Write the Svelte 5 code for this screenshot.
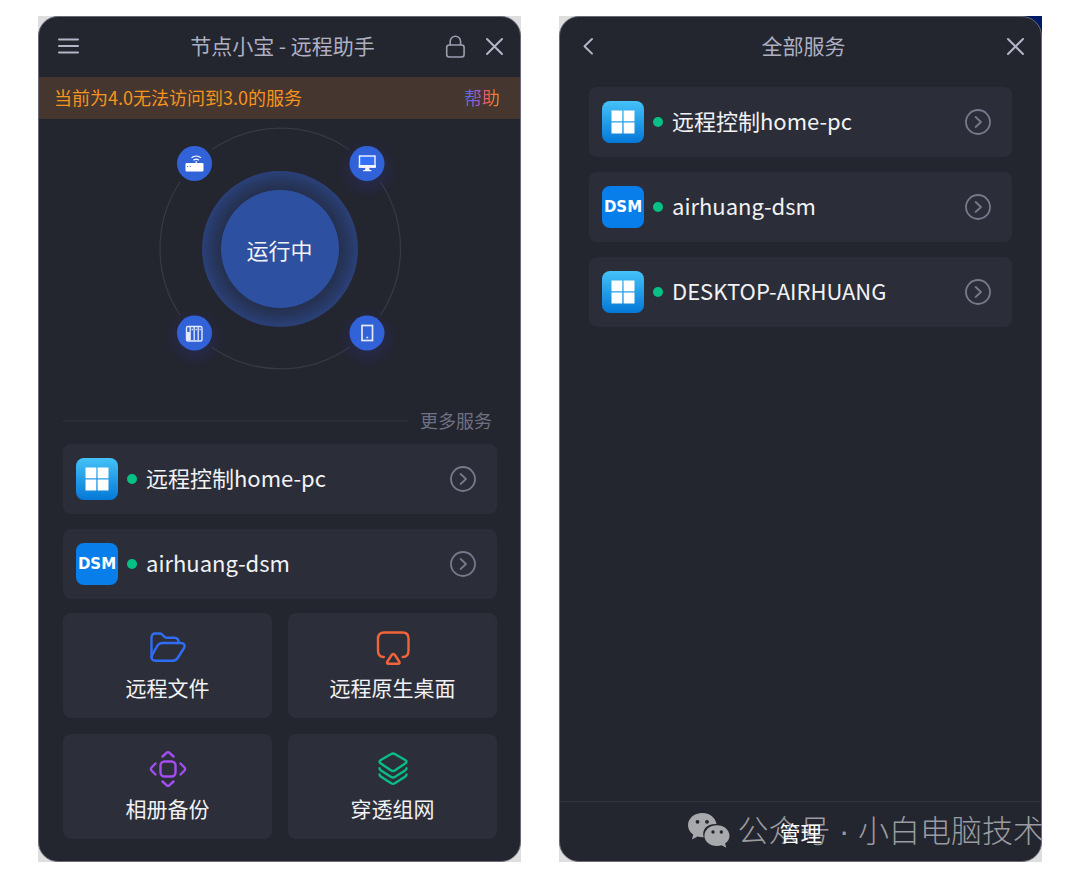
<script>
    const services = [
        { id: 1, name: '远程控制home-pc', type: 'windows' },
        { id: 2, name: 'airhuang-dsm', type: 'dsm' },
        { id: 3, name: 'DESKTOP-AIRHUANG', type: 'windows' }
    ];

    const tools = [
        { id: 'file', name: '远程文件', color: '#2f6df6' },
        { id: 'desktop', name: '远程原生桌面', color: '#f2643a' },
        { id: 'album', name: '相册备份', color: '#a44df0' },
        { id: 'network', name: '穿透组网', color: '#08bd86' }
    ];
</script>

{#snippet closeIcon()}
    <svg class="icon" viewBox="0 0 28 28"><path d="M7 6l15 15M22 6l-15 15" /></svg>
{/snippet}

{#snippet serviceCard(service)}
    <button class="service">
        {#if service.type === 'windows'}
            <span class="logo windows">
                <svg width="24" height="24" viewBox="0 0 24 24" fill="#fff">
                    <path d="M0.5 0.5h10.8v10.8h-10.8zM12.6 0.5h10.9v10.8h-10.9zM0.5 12.6h10.8v10.9h-10.8zM12.6 12.6h10.9v10.9h-10.9z" />
                </svg>
            </span>
        {:else}
            <span class="logo dsm">DSM</span>
        {/if}
        <span class="dot"></span>
        <span class="name">{service.name}</span>
        <svg class="go" viewBox="0 0 26 26">
            <circle cx="13" cy="13" r="12" />
            <path d="M10.6 8l5.4 5-5.4 5" />
        </svg>
    </button>
{/snippet}

<main>
    <div class="frame">
        <section class="window">
            <header>
                <div class="side">
                    <button class="plain" aria-label="菜单">
                        <svg class="icon" viewBox="0 0 28 28"><path d="M2 6.500h19M2 13h19M2 19.500h19" /></svg>
                    </button>
                </div>
                <h1>节点小宝 - 远程助手</h1>
                <div class="side right">
                    <button class="plain" aria-label="锁定">
                        <svg class="icon thin" viewBox="0 0 28 28">
                            <rect x="5.7" y="12" width="17.4" height="12" rx="2.5" />
                            <path d="M9.2 12V8.4a5.2 5.2 0 0 1 10.4 0V12" />
                        </svg>
                    </button>
                    <button class="plain" aria-label="关闭">{@render closeIcon()}</button>
                </div>
            </header>

            <div class="notice">
                <span>当前为4.0无法访问到3.0的服务</span>
                <a href="#help">帮助</a>
            </div>

            <div class="status">
                <svg class="orbit" viewBox="0 0 260 260">
                    <defs>
                        <radialGradient id="halo">
                            <stop offset="0.76" stop-color="#263252" />
                            <stop offset="0.88" stop-color="#283963" />
                            <stop offset="1" stop-color="#2a4078" />
                        </radialGradient>
                        <radialGradient id="glow">
                            <stop offset="0.4" stop-color="#2c3280" stop-opacity="0.3" />
                            <stop offset="1" stop-color="#2c3280" stop-opacity="0" />
                        </radialGradient>
                    </defs>
                    <g fill="none" stroke="#383945" stroke-width="1.3">
                        <path d="M62 30.5A120.500 120.500 0 0 1 199 30.500" />
                        <path d="M230.500 63A120.500 120.500 0 0 1 230.500 196" />
                        <path d="M199 228.500A120.500 120.500 0 0 1 62 228.500" />
                        <path d="M30 196A120.500 120.500 0 0 1 30 63" />
                    </g>
                    <circle cx="130" cy="130" r="78" fill="url(#halo)" />
                    <circle cx="218" cy="50" r="30" fill="url(#glow)" />
                    <circle cx="218" cy="219" r="30" fill="url(#glow)" />
                    <circle cx="45" cy="219" r="30" fill="url(#glow)" />
                    <g fill="#3262d8">
                        <circle cx="44.500" cy="44.500" r="17.500" />
                        <circle cx="217" cy="44.500" r="17.500" />
                        <circle cx="44.500" cy="214" r="17.500" />
                        <circle cx="217" cy="214" r="17.500" />
                    </g>
                    <!-- router -->
                    <rect x="35.500" y="44" width="18" height="8.500" rx="1" fill="#fff" />
                    <g fill="none" stroke="#fff" stroke-width="1.2">
                        <path d="M46.200 44.500v-2.500M43.500 41.200q2.700-2 5.400 0M41.500 38.800q4.700-3.600 9.400 0" />
                    </g>
                    <path d="M37.200 47.500h1M39.700 47.500h1" stroke="#3262d8" />
                    <!-- monitor -->
                    <rect x="209.500" y="37" width="15.500" height="11" fill="#3470fa" stroke="#f2f4ff" stroke-width="1.4" />
                    <path d="M208.800 46h17v2.800h-17zM215.500 48.500h3.600l.6 2.500h1.700v1.200h-8.200v-1.200h1.700z" fill="#f2f4ff" />
                    <!-- nas -->
                    <rect x="36.500" y="207.500" width="15.500" height="14.500" rx="1.500" fill="#3262d8" stroke="#e4e9fb" stroke-width="1.4" />
                    <path d="M36.500 213h3.500v8.500h-3.500z" fill="#e4e9fb" />
                    <path d="M40.200 208v13.500M44.200 208v13.500M48.200 208v13.500" stroke="#e4e9fb" stroke-width="1.300" />
                    <path d="M41.600 210.500h1.300M45.600 210.500h1.300M49.500 210.500h1.300" stroke="#e4e9fb" stroke-width="1.600" />
                    <!-- phone -->
                    <rect x="212" y="206.500" width="10.500" height="15" fill="none" stroke="#e4e9fb" stroke-width="1.700" />
                    <path d="M216.400 218.500h1.800" stroke="#e4e9fb" stroke-width="1.500" />
                </svg>
                <button class="power">运行中</button>
            </div>

            <div class="more">
                <span class="line"></span>
                <a href="#services">更多服务</a>
            </div>

            <div class="home">
                <div class="list">
                    {#each services.slice(0, 2) as service (service.id)}
                        {@render serviceCard(service)}
                    {/each}
                </div>
                <div class="tools">
                    {#each tools as tool (tool.id)}
                        <button class="tool">
                            <svg viewBox="0 0 40 40" stroke={tool.color}>
                                {#if tool.id === 'file'}
                                    <path d="M3.500 29.500V9.500q0-4 4-4h4.200q1.500 0 2.500 1l2.300 2.300q1 1 2.400 1h7.600q4 0 4.200 5.200" />
                                    <path d="M14.500 15h18q5.500 0 3.500 5l-6 9.500q-2 3.300-5.500 3.300H7.500q-5.500-.3-3.300-6l5-8.800q1.800-3 5.300-3z" />
                                {:else if tool.id === 'desktop'}
                                    <path d="M10.800 29q-5.800 0-5.800-6.500V10.500q0-6 6-6h18.500q6 0 6 6v12q0 6.500-5.800 6.500" />
                                    <path d="M18.700 27l-4.300 6.500q-1.300 2.300 1.300 2.300h9.200q2.600 0 1.300-2.300L21.900 27q-1.600-2-3.200 0z" />
                                {:else if tool.id === 'album'}
                                    <rect x="12.500" y="12.500" width="15" height="15" rx="4" />
                                    <path d="M14.500 7.500l4-3.700q1.500-1.200 3 0l4 3.700M14.500 32.500l4 3.700q1.500 1.200 3 0l4-3.700M7.500 14.500l-4 4q-1.200 1.500 0 3l4 4M32.500 14.500l4 4q1.200 1.500 0 3l-4 4" />
                                {:else}
                                    <path d="M18.200 5q1.800-1 3.600 0l10.400 6q2.600 1.700 0 3.400l-10.400 7q-1.800 1.100-3.600 0l-10.400-7q-2.600-1.700 0-3.400z" />
                                    <path d="M6.500 19.200q0 1.200 1.500 2.200l10.200 6.500q1.800 1.100 3.600 0L32 21.400q1.500-1 1.500-2.200M6.500 25.500q0 1.200 1.500 2.200l10.200 6.600q1.800 1.100 3.600 0L32 27.700q1.500-1 1.500-2.200" />
                                {/if}
                            </svg>
                            <span>{tool.name}</span>
                        </button>
                    {/each}
                </div>
            </div>
        </section>
    </div>

    <div class="frame second">
        <section class="window">
            <header>
                <div class="side">
                    <button class="plain" aria-label="返回">
                        <svg class="icon" viewBox="0 0 28 28"><path d="M14 6l-7.500 7.300 7.500 7.300" /></svg>
                    </button>
                </div>
                <h1>全部服务</h1>
                <div class="side right">
                    <button class="plain" aria-label="关闭">{@render closeIcon()}</button>
                </div>
            </header>
            <div class="list all">
                {#each services as service (service.id)}
                    {@render serviceCard(service)}
                {/each}
            </div>
            <footer>
                <button class="manage">管理</button>
            </footer>
        </section>
        <div class="watermark">
            <svg width="44" height="36" viewBox="0 0 44 36">
                <path d="M15.500 1C7 1 1 6.500 1 13.300c0 4 2 7 5.200 9.300L5 27.500l5.500-3c2 .6 4 .8 6.200.7C14.500 17.500 20 11.500 29.500 12 28.500 5.500 22.500 1 15.500 1z" />
                <path d="M30 13.200c-7.300 0-12.600 4.700-12.600 10.500S22.700 34 30 34c1.700 0 3.200-.3 4.600-.7l4.700 2.500-1.200-4.200c2.700-2 4.400-4.700 4.400-7.900 0-5.800-5.400-10.500-12.500-10.500z" />
                <g fill="#22242e">
                    <circle cx="10.500" cy="9.800" r="1.900" />
                    <circle cx="20" cy="9.800" r="1.900" />
                    <circle cx="26" cy="20" r="1.700" />
                    <circle cx="34.300" cy="20" r="1.700" />
                </g>
            </svg>
            <span>公众号 · 小白电脑技术</span>
        </div>
    </div>
</main>

<style>
    :global(body) {
        background: #fff;
    }

    main {
        display: grid;
        grid-template-columns: 1fr 1fr;
        gap: 38px;
        padding: 16px 38px 12px;
        font-family: "Noto Sans CJK SC", "Noto Sans", sans-serif;
        color: #f2f2f4;
    }

    button {
        font: inherit;
        color: inherit;
        border: 0;
        padding: 0;
        background: none;
        cursor: pointer;
    }

    a {
        text-decoration: none;
    }

    .frame {
        position: relative;
        display: grid;
        background: #dededf;
    }
    .second {
        background: linear-gradient(to bottom left, #001a66 20px, #dededf 60px);
    }

    .window {
        display: flex;
        flex-direction: column;
        min-width: 0;
        background: #23252f;
        border: 1px solid #686a76;
        border-radius: 20px;
        overflow: hidden;
    }

    header {
        display: grid;
        grid-template-columns: 1fr auto 1fr;
        align-items: center;
        height: 60px;
        padding: 0 12px 0 18px;
    }

    h1 {
        margin: 0;
        padding-bottom: 4px;
        font-size: 21px;
        font-weight: 400;
        line-height: 30px;
        color: #aeb0c2;
    }

    .side {
        display: flex;
        gap: 11px;
    }
    .right {
        justify-content: flex-end;
    }

    .plain {
        display: flex;
    }

    .icon {
        width: 28px;
        height: 28px;
        fill: none;
        stroke: #b4b6c8;
        stroke-width: 2;
        stroke-linecap: round;
        stroke-linejoin: round;
    }
    .thin {
        stroke: #9c9eb0;
        stroke-width: 1.6;
    }

    .notice {
        display: flex;
        justify-content: space-between;
        align-items: center;
        height: 40px;
        padding: 0 20px 2px 15px;
        font-size: 18px;
        background: #45372f;
        color: #f7931e;
    }
    .notice a {
        color: transparent;
        background: linear-gradient(to right, #3f6bff, #a55bd0 45%, #ef5f50 65%, #ff8a1f);
        background-clip: text;
    }

    .status {
        position: relative;
        display: flex;
        justify-content: center;
    }
    .orbit {
        width: 260px;
        height: 260px;
    }

    .power {
        position: absolute;
        top: 71px;
        left: calc(50% - 59px);
        width: 118px;
        height: 118px;
        border-radius: 50%;
        font-size: 22px;
        background: #2d50a0;
        box-shadow: 0 0 12px #263150;
    }

    .more {
        display: flex;
        align-items: center;
        gap: 12px;
        height: 28px;
        margin: 28px 28px 9px 24px;
        font-size: 18px;
    }
    .more a {
        padding-bottom: 2px;
        color: #6f7182;
    }
    .line {
        flex: 1;
        height: 2px;
        background: #2b2d38;
    }

    .home {
        padding: 0 23px 22px 24px;
    }

    .list {
        display: flex;
        flex-direction: column;
        gap: 15px;
    }
    .all {
        flex: 1;
        padding: 10px 29px;
    }

    .service {
        display: flex;
        align-items: center;
        height: 70px;
        padding: 0 21px 0 13px;
        border-radius: 8px;
        background: #2b2e39;
        font-size: 22px;
        text-align: left;
    }

    .logo {
        display: flex;
        align-items: center;
        justify-content: center;
        width: 42px;
        height: 42px;
        border-radius: 8px;
    }
    .windows {
        background: linear-gradient(#44c2f8, #0478d7);
    }
    .dsm {
        background: #087eea;
        font-family: "DejaVu Sans", sans-serif;
        font-size: 15px;
        font-weight: 700;
        color: #fff;
    }

    .dot {
        width: 10px;
        height: 10px;
        margin: 0 9px;
        border-radius: 50%;
        background: #07c085;
    }

    .name {
        flex: 1;
        padding-bottom: 5px;
    }

    .go {
        width: 26px;
        height: 26px;
        fill: none;
        stroke: #77798c;
        stroke-width: 1.8;
        stroke-linecap: round;
        stroke-linejoin: round;
    }

    .tools {
        display: grid;
        grid-template-columns: 1fr 1fr;
        gap: 16px;
        margin-top: 14px;
    }

    .tool {
        display: flex;
        flex-direction: column;
        align-items: center;
        height: 105px;
        padding-top: 15px;
        border-radius: 8px;
        background: #2c2f3a;
        font-size: 21px;
        line-height: 30px;
    }
    .tool svg {
        width: 40px;
        height: 40px;
        margin-bottom: 4px;
        fill: none;
        stroke-width: 2.4;
        stroke-linecap: round;
        stroke-linejoin: round;
    }

    footer {
        display: flex;
        height: 59px;
        border-top: 1px solid #31333e;
    }
    .manage {
        position: relative;
        flex: 1;
        z-index: 2;
        font-size: 21px;
        color: #fff;
    }

    .watermark {
        position: absolute;
        right: -2px;
        bottom: 10px;
        display: flex;
        align-items: center;
        gap: 6px;
        font-family: "Liberation Sans", "Noto Sans CJK SC", sans-serif;
        font-size: 31px;
        font-weight: 300;
        line-height: 40px;
        white-space: nowrap;
        color: #9b9ca0;
        pointer-events: none;
    }
    .watermark span {
        padding-top: 4px;
    }
    .watermark svg {
        fill: #a8a9ac;
    }
</style>
